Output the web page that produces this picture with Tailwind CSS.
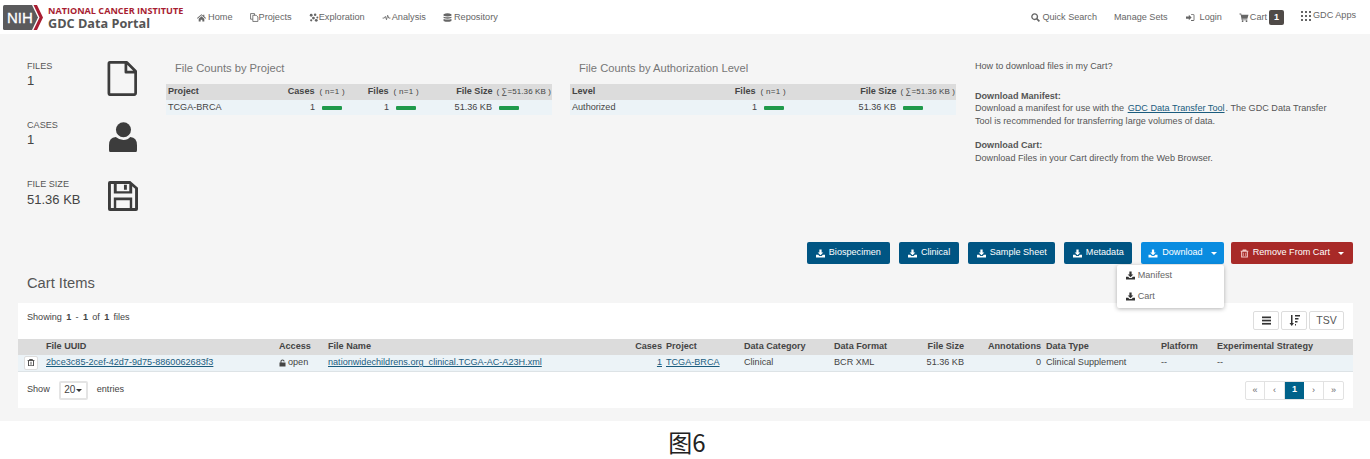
<!DOCTYPE html>
<html><head><meta charset="utf-8"><script src="https://cdn.jsdelivr.net/npm/@tailwindcss/browser@4"></script></head>
<body class="bg-white text-[#444] text-[9.1px] leading-none font-['Liberation_Sans',Arial,sans-serif] w-[1370px] h-[459px] overflow-hidden">
<svg class="hidden"><defs>
<symbol id="dl" viewBox="0 0 16 16"><path fill="currentColor" d="M6 1h4v5h3L8 11 3 6h3zM0 10h4l2 2.5h4L12 10h4v5H0z"/></symbol>
</defs></svg>
<header class="h-[34px] flex items-center bg-white">
  <div class="flex items-center w-[197px] pl-[3px]">
    <svg width="40" height="25" viewBox="0 0 40 25" class="shrink-0"><path d="M1.5 0H29l6 12.5L29 25H1.5Q0 25 0 23.5V1.500Q0 0 1.500 0z" fill="#5a5a5c"/><path d="M30.500 0H34l6 12.500L34 25h-3.500l6-12.500z" fill="#a81d32"/><text x="4" y="18" fill="#fff" font-size="15" font-family="Liberation Sans" stroke="#fff" stroke-width="0.3">NIH</text></svg>
    <div class="ml-[5px] flex flex-col gap-[1px] mt-[1px]">
      <span class="text-[#a81d32] text-[9.1px] leading-[10px] font-bold whitespace-nowrap font-['Open_Sans']">NATIONAL CANCER INSTITUTE</span>
      <span class="text-[#555] text-[12.700px] leading-[13px] font-bold whitespace-nowrap font-['Open_Sans']">GDC Data Portal</span>
    </div>
  </div>
  <nav class="flex items-center text-[#666] text-[9.2px] gap-[17px] pt-[1px]">
    <span class="flex items-center gap-[2px]"><svg width="9" height="9" viewBox="0 0 16 16"><path fill="currentColor" d="M8 2 0 9l1 1 7-6 7 6 1-1-3-2.600V3h-2v1.700zM3 10v5h3.500v-3h3v3H13v-5L8 5.700z"/></svg>Home</span>
    <span class="flex items-center"><svg width="9" height="9" viewBox="0 0 16 16"><path fill="none" stroke="currentColor" stroke-width="1.500" d="M1 1h7v3M1 1v10h4M5 4h6l3 3v8H5z"/></svg>Projects</span>
    <span class="flex items-center"><svg width="10" height="9" viewBox="0 0 16 16"><g fill="currentColor"><circle cx="3" cy="4" r="2.500"/><circle cx="10" cy="3" r="2.200"/><circle cx="14" cy="8" r="1.800"/><circle cx="7" cy="9" r="2.500"/><circle cx="3" cy="13" r="2"/><circle cx="12" cy="13" r="2.500"/></g></svg>Exploration</span>
    <span class="flex items-center gap-[1px]"><svg width="9" height="9" viewBox="0 0 16 16"><path fill="none" stroke="currentColor" stroke-width="1.500" d="M1 9h3l2-3 2 6 2-8 2 5h3"/></svg>Analysis</span>
    <span class="flex items-center gap-[2px]"><svg width="9" height="9" viewBox="0 0 16 16"><path fill="currentColor" d="M1 2q7-3 14 0v3q-7 2-14 0zM1 6.500q7 2 14 0V9q-7 2-14 0zM1 10.500q7 2 14 0V14q-7 3-14 0z"/></svg>Repository</span>
  </nav>
  <nav class="ml-auto flex items-center text-[#666] pr-[14px] pt-[1px]">
    <span class="flex items-center gap-[2px]"><svg width="9" height="9" viewBox="0 0 16 16"><circle cx="6.500" cy="6.500" r="5" fill="none" stroke="currentColor" stroke-width="2.400"/><path d="m10 10 5 5" stroke="currentColor" stroke-width="3"/></svg>Quick Search</span>
    <span class="ml-[17px]">Manage Sets</span>
    <span class="ml-[18px] flex items-center gap-[5px]"><svg width="9" height="9" viewBox="0 0 16 16"><path fill="currentColor" d="M0 6h5V3l5 5-5 5v-3H0zM9 2h4q2 0 2 2v8q0 2-2 2H9v-1.500h4q.5 0 .5-.5V4q0-.5-.5-.5H9z"/></svg>Login</span>
    <span class="ml-[17px] flex items-center gap-[1px]"><svg width="10" height="9" viewBox="0 0 16 16"><path fill="currentColor" d="M0 1h3l.5 2H16l-2 7H5l.3 1.500H14V13H4L2 2.500H0z"/><circle cx="5.500" cy="14.500" r="1.500" fill="currentColor"/><circle cx="12.500" cy="14.500" r="1.500" fill="currentColor"/></svg>Cart<b class="ml-[1px] w-[15px] h-[15px] rounded-[2px] bg-[#4f4a47] text-white flex items-center justify-center">1</b></span>
    <span class="ml-[17px] flex items-center gap-[2px] -mt-[3px]"><svg width="10" height="10" viewBox="0 0 10 10" fill="currentColor"><rect width="2" height="2" x="0" y="0"/><rect width="2" height="2" x="4" y="0"/><rect width="2" height="2" x="8" y="0"/><rect width="2" height="2" x="0" y="4"/><rect width="2" height="2" x="4" y="4"/><rect width="2" height="2" x="8" y="4"/><rect width="2" height="2" x="0" y="8"/><rect width="2" height="2" x="4" y="8"/><rect width="2" height="2" x="8" y="8"/></svg>GDC Apps</span>
  </nav>
</header>
<main class="h-[387px] bg-[#f5f5f5] pt-[27px]">
  <section class="flex h-[181px]">
    <div class="w-[166px] pl-[27px] shrink-0 flex flex-col">
      <div class="h-[59px] flex"><div class="w-[80px] pt-[1px]"><div class="text-[#555] mb-[3px]">FILES</div><div class="text-[13px]">1</div></div><svg width="31" height="35" viewBox="0 0 31 36"><path d="M2.500 1.500H20L29 10.500V33q0 1.500-1.500 1.500h-25Q1.500 34.500 1.500 33V3q0-1.500 1-1.500zM19 2v9.500h10" fill="none" stroke="#3c3c3c" stroke-width="2.800" stroke-linejoin="round"/></svg></div>
      <div class="h-[59px] flex"><div class="w-[80px] pt-[1px]"><div class="text-[#555] mb-[3px]">CASES</div><div class="text-[13px]">1</div></div><svg width="28" height="30" viewBox="0 0 29 31" class="mt-[2px] ml-[2px]"><circle cx="15" cy="8" r="7.800" fill="#3c3c3c"/><path d="M1 31q-1 0-1-2v-5q0-8 7-8.500 3.500 3 8 3t7-3q7 .5 7 8.500v5q0 2-1 2z" fill="#3c3c3c"/></svg></div>
      <div class="flex"><div class="w-[80px] pt-[1px]"><div class="text-[#555] mb-[4px]">FILE SIZE</div><div class="text-[13px] whitespace-nowrap">51.36 KB</div></div><svg width="30" height="30" viewBox="0 0 31 31" class="mt-[2px] ml-[1px]"><path fill-rule="evenodd" fill="#3c3c3c" d="M2 0h21l8 7v22q0 2-2 2H2q-2 0-2-2V2q0-2 2-2zm1 3V28h3V17h19v11h3V8L25 5.500V13H6V3zM9 3V10.500h13V3zM16.500 4h3v5h-3zM8.500 20v8h14v-8z"/></svg></div>
    </div>
    <div class="w-[386px] shrink-0">
      <h3 class="pl-[9px] pt-[2px] text-[#777] text-[11.2px] h-[23px]">File Counts by Project</h3>
      <div class="grid grid-cols-[177px_74px_132px] h-[16px] items-center bg-[#dcdcdc] font-bold pl-[2px] whitespace-nowrap">
        <span class="flex justify-between"><span>Project</span><span class="flex items-center">Cases<i class="not-italic font-normal ml-[5px] text-[8px] tracking-[0.3px]">( n=1 )</i></span></span>
        <span class="flex justify-end items-center">Files<i class="not-italic font-normal ml-[5px] text-[8px] tracking-[0.3px]">( n=1 )</i></span>
        <span class="flex justify-end items-center">File Size<i class="not-italic font-normal ml-[4px] text-[8px] tracking-[0.1px]">( ∑=51.36 KB )</i></span>
      </div>
      <div class="grid grid-cols-[174px_74px_103px] h-[15px] items-center bg-[#ecf3f7] pl-[2px]">
        <span class="flex justify-between items-center"><span>TCGA-BRCA</span><span class="flex items-center gap-[7px]">1<b class="block w-[20px] h-[4px] bg-[#1f9a4b] rounded-[1px]"></b></span></span>
        <span class="flex items-center justify-end gap-[7px]">1<b class="block w-[20px] h-[4px] bg-[#1f9a4b] rounded-[1px]"></b></span>
        <span class="flex items-center justify-end gap-[7px] whitespace-nowrap">51.36 KB<b class="block w-[20px] h-[4px] bg-[#1f9a4b] rounded-[1px]"></b></span>
      </div>
    </div>
    <div class="w-[386px] shrink-0 ml-[18px]">
      <h3 class="pl-[9px] pt-[2px] text-[#777] text-[11.2px] h-[23px]">File Counts by Authorization Level</h3>
      <div class="grid grid-cols-[214px_169px] h-[16px] items-center bg-[#dcdcdc] font-bold pl-[2px] whitespace-nowrap">
        <span class="flex justify-between"><span>Level</span><span class="flex items-center">Files<i class="not-italic font-normal ml-[5px] text-[8px] tracking-[0.3px]">( n=1 )</i></span></span>
        <span class="flex justify-end items-center">File Size<i class="not-italic font-normal ml-[4px] text-[8px] tracking-[0.1px]">( ∑=51.36 KB )</i></span>
      </div>
      <div class="grid grid-cols-[212px_139px] h-[15px] items-center bg-[#ecf3f7] pl-[2px]">
        <span class="flex justify-between items-center"><span>Authorized</span><span class="flex items-center gap-[7px]">1<b class="block w-[20px] h-[4px] bg-[#1f9a4b] rounded-[1px]"></b></span></span>
        <span class="flex items-center justify-end gap-[7px] whitespace-nowrap">51.36 KB<b class="block w-[20px] h-[4px] bg-[#1f9a4b] rounded-[1px]"></b></span>
      </div>
    </div>
    <div class="ml-[19px] w-[365px] leading-[12.500px] text-[#555] -mt-[1px]">
      <p class="mb-[17px]">How to download files in my Cart?</p>
      <p class="mb-[12px]"><b>Download Manifest:</b><br>Download a manifest for use with the <a class="underline text-[#1a5c7e] mx-[1px]">GDC Data Transfer Tool</a>. The GDC Data Transfer<br>Tool is recommended for transferring large volumes of data.</p>
      <p><b>Download Cart:</b><br>Download Files in your Cart directly from the Web Browser.</p>
    </div>
  </section>
  <div class="flex justify-end pr-[17px] gap-[9px] text-white h-[22px]">
    <button class="flex items-center gap-[4px] px-[9px] rounded-[2px] bg-[#005583]"><svg width="9" height="9"><use href="#dl"/></svg>Biospecimen</button>
    <button class="flex items-center gap-[4px] px-[9px] rounded-[2px] bg-[#005583]"><svg width="9" height="9"><use href="#dl"/></svg>Clinical</button>
    <button class="flex items-center gap-[4px] px-[8.5px] rounded-[2px] bg-[#005583]"><svg width="9" height="9"><use href="#dl"/></svg>Sample Sheet</button>
    <button class="flex items-center gap-[4px] px-[8.5px] rounded-[2px] bg-[#005583]"><svg width="9" height="9"><use href="#dl"/></svg>Metadata</button>
    <div class="relative flex">
      <button class="flex items-center gap-[4px] px-[7px] rounded-[2px] bg-[#0a8ce0]"><svg width="10" height="9"><use href="#dl"/></svg>Download<span class="ml-[4px] border-x-[3px] border-t-[3px] border-x-transparent border-t-white"></span></button>
      <div class="absolute top-[23px] right-0 w-[107px] h-[43px] bg-white rounded-[2px] shadow-[0_1px_4px_rgba(0,0,0,0.3)] text-[#666] z-10 flex flex-col">
        <span class="h-[21px] pl-[9px] flex items-center gap-[3px]"><svg width="9" height="9" class="text-[#333]"><use href="#dl"/></svg>Manifest</span>
        <span class="h-[21px] pl-[9px] flex items-center gap-[3px]"><svg width="9" height="9" class="text-[#333]"><use href="#dl"/></svg>Cart</span>
      </div>
    </div>
    <button class="flex items-center gap-[4px] px-[9px] -ml-[2px] rounded-[2px] bg-[#a82a28]"><svg width="9" height="9" viewBox="0 0 16 16"><path fill="#f3c9c8" d="M5 1h6l1 2h3v1.500h-1V15H2V4.500H1V3h3zM4 5v8.500h8V5zM6 6.500h1v6H6zM9 6.500h1v6H9z"/></svg>Remove From Cart<span class="ml-[4px] border-x-[3px] border-t-[3px] border-x-transparent border-t-white"></span></button>
  </div>
  <h2 class="pl-[27px] text-[14.700px] text-[#555] h-[39px] pt-[12px]">Cart Items</h2>
  <section class="mx-[18px] w-[1335px] h-[105px] bg-white flex flex-col">
    <div class="h-[35.500px] flex justify-between pl-[9px] pr-[9px]">
      <div class="pt-[10px] flex gap-[4.300px]"><span>Showing</span><b>1</b><span>-</span><b>1</b><span>of</span><b>1</b><span>files</span></div>
      <div class="flex gap-[2px] pt-[8px] h-[27px] text-[#555]">
        <span class="w-[26px] border border-[#ddd] rounded-[2px] flex items-center justify-center"><svg width="9" height="9" viewBox="0 0 9 9" fill="#333"><rect width="9" height="1.700" y="0.500"/><rect width="9" height="1.700" y="3.700"/><rect width="9" height="1.700" y="6.900"/></svg></span>
        <span class="w-[26px] border border-[#ddd] rounded-[2px] flex items-center justify-center"><svg width="11" height="11" viewBox="0 0 11 11" fill="#333"><path d="M2 0h1.500v8H5L2.750 11 .500 8H2zM6 0h5v1.500H6zM6 3h3.500v1.500H6zM6 6h2.500v1.500H6zM6 9h1v1.500H6z"/></svg></span>
        <span class="w-[35px] border border-[#ddd] rounded-[2px] flex items-center justify-center text-[10.500px]">TSV</span>
      </div>
    </div>
    <div class="grid grid-cols-[28px_233px_49px_300px_34px_82px_90px_90px_40px_77px_120px_56px_1fr] h-[16px] items-center bg-[#dcdcdc] font-bold whitespace-nowrap">
      <span></span><span>File UUID</span><span>Access</span><span>File Name</span><span class="text-right">Cases</span><span class="pl-[4px]">Project</span><span>Data Category</span><span>Data Format</span><span class="text-right">File Size</span><span class="text-right">Annotations</span><span class="pl-[5px]">Data Type</span><span>Platform</span><span>Experimental Strategy</span>
    </div>
    <div class="grid grid-cols-[28px_233px_49px_300px_34px_82px_90px_90px_40px_77px_120px_56px_1fr] h-[17px] items-center bg-[#ecf3f7] border-b border-[#dde3e6] whitespace-nowrap">
      <span class="pl-[6px]"><span class="w-[14px] h-[14px] bg-white border border-[#ddd] rounded-[2px] flex items-center justify-center"><svg width="8" height="9" viewBox="0 0 16 16"><path fill="#555" d="M5 1h6l1 2h3v1.500h-1V15H2V4.500H1V3h3zM4 5v8.500h8V5zM6 6.500h1v6H6zM9 6.500h1v6H9z"/></svg></span></span>
      <a class="underline text-[#1a5c7e]">2bce3c85-2cef-42d7-9d75-8860062683f3</a>
      <span class="flex items-center gap-[2px]"><svg width="7" height="8" viewBox="0 0 14 16"><path fill="#444" d="M1 7h12v8H1zM3 7V4q0-3 4-3t4 3v1H9V4q0-1.200-2-1.200T5 4v3z"/></svg>open</span>
      <a class="underline text-[#1a5c7e]">nationwidechildrens.org_clinical.TCGA-AC-A23H.xml</a>
      <a class="underline text-[#1a5c7e] text-right">1</a>
      <span class="pl-[4px]"><a class="underline text-[#1a5c7e]">TCGA-BRCA</a></span>
      <span>Clinical</span><span>BCR XML</span><span class="text-right">51.36 KB</span><span class="text-right">0</span><span class="pl-[5px]">Clinical Supplement</span><span>--</span><span>--</span>
    </div>
    <div class="flex-1 flex justify-between pl-[9px] pr-[9px] pt-[9px]">
      <div class="flex items-center h-[19px] gap-[9px]"><span>Show</span><span class="w-[29px] h-[19px] border-2 border-[#e4e4e4] rounded-[2px] flex items-center justify-center gap-[1px] text-[10px]">20<span class="border-x-[3px] border-t-[3px] border-x-transparent border-t-[#333]"></span></span><span>entries</span></div>
      <div class="flex h-[19px] border border-[#e2e2e2] rounded-[2px] text-[#666]">
        <span class="w-[19px] pt-[2px] flex items-center justify-center border-r border-[#e2e2e2]">«</span><span class="w-[20px] pt-[2px] flex items-center justify-center border-r border-[#e2e2e2]">‹</span><span class="w-[19px] flex items-center justify-center bg-[#00628a] text-white font-bold">1</span><span class="w-[20px] pt-[2px] flex items-center justify-center border-r border-[#e2e2e2]">›</span><span class="w-[19px] pt-[2px] flex items-center justify-center">»</span>
      </div>
    </div>
  </section>
</main>
<footer class="h-[38px] flex items-center justify-center text-[24px] text-[#222] font-['Noto_Sans_CJK_SC','Noto_Sans',sans-serif] pt-[4px] pl-[4px]">图6</footer>
</body></html>
